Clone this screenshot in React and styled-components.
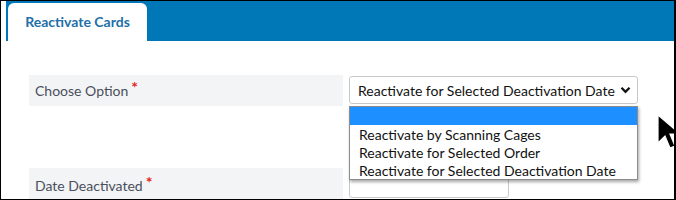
import React from "react";
import styled, { createGlobalStyle } from "styled-components";

const Global = createGlobalStyle`
  html, body { margin: 0; padding: 0; background: #fff; }
  body { font-family: Lato, "Open Sans", Arial, sans-serif; }
  * { box-sizing: border-box; }
`;

const Frame = styled.div`
  position: relative;
  width: 676px;
  height: 200px;
  border: 1px solid #000;
  border-right-width: 2px;
  overflow: hidden;
  background: #fff;
`;

const TabBar = styled.div`
  display: flex;
  align-items: flex-end;
  height: 40px;
  margin-left: 5px;
  padding-left: 2px;
  background: #0077b6;
`;

const Tab = styled.div`
  display: flex;
  align-items: center;
  justify-content: center;
  width: 139px;
  height: 38px;
  background: #fff;
  border-radius: 6px 6px 0 0;
  color: #226fa9;
  font-weight: 700;
  font-size: 14px;
  padding-bottom: 1px;
`;

const Content = styled.div`
  display: flex;
  flex-direction: column;
  gap: 62px;
  padding: 34px 0 0 28px;
`;

const FieldRow = styled.div`
  display: grid;
  grid-template-columns: 314px 289px;
  column-gap: 6px;
  align-items: start;
`;

const Label = styled.div`
  display: flex;
  align-items: center;
  height: ${(p) => p.$h}px;
  padding-left: 6px;
  background: #f3f4f6;
  color: #4a4f5b;
  font-size: 14px;
`;

const Star = styled.span`
  color: #e3201b;
  font-size: 16px;
  font-weight: 700;
  margin-left: 3px;
  position: relative;
  top: -4px;
`;

const SelectWrap = styled.div`
  position: relative;
  margin-top: 1px;
`;

const SelectBox = styled.div`
  display: flex;
  align-items: center;
  justify-content: space-between;
  height: 28px;
  padding: 0 6px 0 8px;
  border: 1px solid #c9c9c9;
  border-radius: 3px;
  background: #fff;
  color: #111;
  font-size: 14px;
`;

const InputBox = styled.div`
  width: 160px;
  height: 29px;
  margin-top: 1px;
  border: 1px solid #c9c9c9;
  border-radius: 3px;
  background: #fff;
`;

const Menu = styled.ul`
  position: absolute;
  top: 30px;
  left: 0;
  width: 289px;
  margin: 0;
  padding: 0;
  list-style: none;
  background: #fff;
  border: 1px solid #8c8c8c;
  box-shadow: 1px 2px 3px rgba(0, 0, 0, 0.35);
  z-index: 5;
`;

const Option = styled.li`
  display: flex;
  align-items: center;
  height: 18px;
  padding-left: 9px;
  font-size: 14px;
  color: ${(p) => (p.$active ? "#fff" : "#111")};
  background: ${(p) => (p.$active ? "#1e8fff" : "#fff")};
`;

const Cursor = styled.svg`
  position: absolute;
  left: 655px;
  top: 113px;
  z-index: 10;
`;

const Chevron = () => (
  <svg width="11" height="8" viewBox="0 0 11 8">
    <path d="M1.5 1.8 L5.5 5.8 L9.5 1.8" fill="none" stroke="#111" strokeWidth="2.3" />
  </svg>
);

const options = [
  "",
  "Reactivate by Scanning Cages",
  "Reactivate for Selected Order",
  "Reactivate for Selected Deactivation Date",
];

export default function App() {
  return (
    <>
      <Global />
      <Frame>
        <TabBar>
          <Tab>Reactivate Cards</Tab>
        </TabBar>
        <Content>
          <FieldRow>
            <Label $h={31}>
              Choose Option<Star>*</Star>
            </Label>
            <SelectWrap>
              <SelectBox>
                <span>Reactivate for Selected Deactivation Date</span>
                <Chevron />
              </SelectBox>
              <Menu>
                {options.map((o, i) => (
                  <Option key={i} $active={i === 0}>
                    {o}
                  </Option>
                ))}
              </Menu>
            </SelectWrap>
          </FieldRow>
          <FieldRow>
            <Label $h={34}>
              Date Deactivated<Star>*</Star>
            </Label>
            <InputBox />
          </FieldRow>
        </Content>
        <Cursor width="24" height="40" viewBox="0 0 24 40">
          <path d="M2 1 L2 29 L9 22 L14 34 L19 32 L14 20 L24 20 Z" fill="#000" stroke="#fff" strokeWidth="1.2" />
        </Cursor>
      </Frame>
    </>
  );
}
